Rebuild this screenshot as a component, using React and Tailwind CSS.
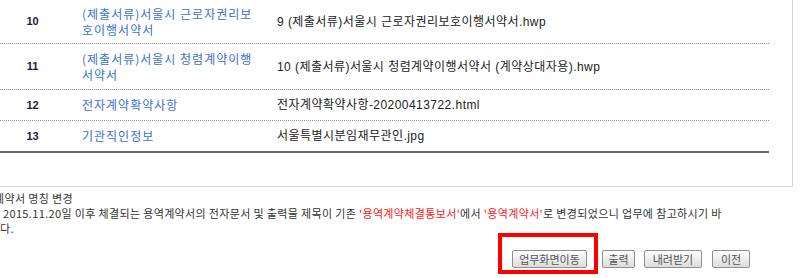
import React from 'react';

const rows = [
  { no: '10', title: '(제출서류)서울시 근로자권리보호이행서약서', file: '9 (제출서류)서울시 근로자권리보호이행서약서.hwp', h: 'h-[44px]', line: 'border-b border-dotted border-[#8c8c8c]' },
  { no: '11', title: '(제출서류)서울시 청렴계약이행서약서', file: '10 (제출서류)서울시 청렴계약이행서약서 (계약상대자용).hwp', h: 'h-[46px]', line: 'border-b border-dotted border-[#8c8c8c]' },
  { no: '12', title: '전자계약확약사항', file: '전자계약확약사항-20200413722.html', h: 'h-[31px]', line: 'border-b border-dotted border-[#8c8c8c]' },
  { no: '13', title: '기관직인정보', file: '서울특별시분임재무관인.jpg', h: 'h-[32px]', line: 'border-b-2 border-[#6b6b6b]' },
];

const Btn = ({ children, w }) => (
  <button
    className={`${w} h-[18px] border border-[#8f8f8f] rounded-[2px] bg-gradient-to-b from-[#ffffff] to-[#dcdcdc] text-[11px] leading-[16px] text-[#555] font-['Noto_Sans_CJK_KR',sans-serif] text-center`}
  >
    {children}
  </button>
);

export default function App() {
  return (
    <div className="w-[800px] h-[278px] bg-white overflow-hidden">
      {/* file list panel */}
      <div className="w-[793px] border-r border-b border-[#d6d6d6] pb-[33px]">
        <div className="w-[769px]">
          {rows.map((r) => (
            <div key={r.no} className={`flex items-center ${r.h} ${r.line}`}>
              <div className="w-[65px] text-center text-[11px] font-bold text-[#1b1b3a] font-['Liberation_Sans',sans-serif]">
                {r.no}
              </div>
              <div className="w-[195px] pl-[17px] text-[12px] leading-[16px] tracking-[1px] text-[#3a6fd0] font-['Noto_Sans_CJK_KR',sans-serif]">
                {r.title}
              </div>
              <div className="pl-[17px] text-[12px] leading-[16px] tracking-[0.45px] text-[#222] font-['Liberation_Sans','Noto_Sans_CJK_KR',sans-serif]">
                {r.file}
              </div>
            </div>
          ))}
        </div>
      </div>

      {/* notice */}
      <div className="mt-[4px] text-[11px] leading-[15px] tracking-[0.35px] text-[#333] font-['Noto_Sans_CJK_KR',sans-serif] whitespace-nowrap">
        <div className="-ml-[6px]">계약서 명칭 변경</div>
        <div className="pl-[3px]">
          2015.11.20일 이후 체결되는 용역계약서의 전자문서 및 출력물 제목이 기존{' '}
          <span className="text-[#ff2020]">'용역계약체결통보서'</span>에서{' '}
          <span className="text-[#ff2020]">'용역계약서'</span>로 변경되었으니 업무에 참고하시기 바
        </div>
        <div>다.</div>
      </div>

      {/* buttons */}
      <div className="mt-[10px] flex pl-[512px]">
        <span className="relative">
          <Btn w="w-[75px]">업무화면이동</Btn>
          <span className="absolute -left-[14px] -top-[13px] w-[100px] h-[41px] border-[4px] border-[#ff0000]" />
        </span>
        <span className="ml-[15px]">
          <Btn w="w-[33px]">출력</Btn>
        </span>
        <span className="ml-[9px]">
          <Btn w="w-[58px]">내려받기</Btn>
        </span>
        <span className="ml-[10px]">
          <Btn w="w-[38px]">이전</Btn>
        </span>
      </div>
    </div>
  );
}
